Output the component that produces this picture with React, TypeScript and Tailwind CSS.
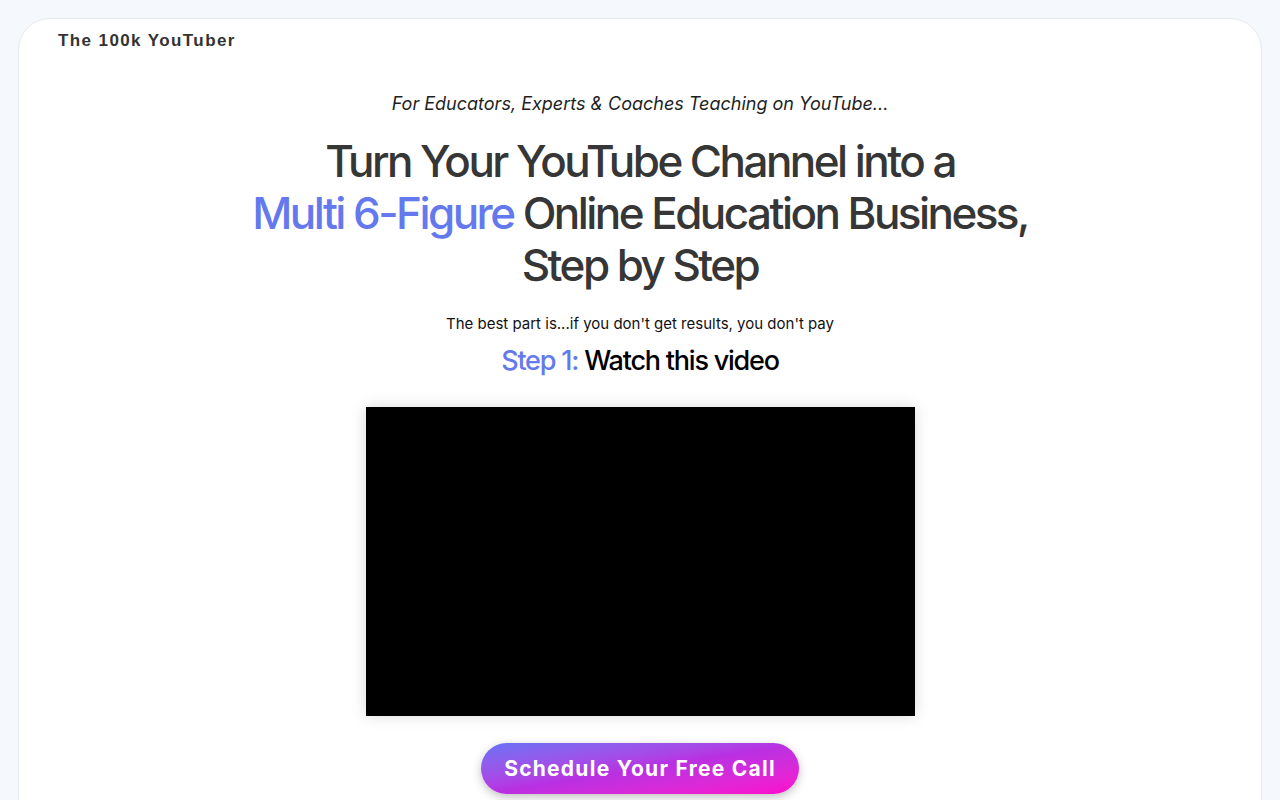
export default function App() {
  return (
    <div className="min-h-screen bg-[#f5f9fe] px-[18px] pt-[18px]">
      <div className="min-h-[820px] rounded-t-[32px] border border-[#e6eaef] bg-white px-10 pt-[14px] pb-10">
        <div
          className="-mt-[2px] -ml-[1px] text-[17px] font-bold leading-5 tracking-[1.4px] text-[#333333]"
          style={{ fontFamily: '"Liberation Sans", Arial, sans-serif' }}
        >
          The 100k YouTuber
        </div>

        <div className="flex flex-col items-center" style={{ fontFamily: "Inter, sans-serif" }}>
          <p className="mt-[41px] text-[18px] italic leading-6 text-[#1f1f1f]">
            For Educators, Experts &amp; Coaches Teaching on YouTube...
          </p>
          <h1 className="mt-[19px] text-center text-[44px] font-medium leading-[52px] tracking-[-0.058em] text-[#363636]">
            Turn Your YouTube Channel into a
            <br />
            <span className="text-[#6479ee]">Multi 6-Figure</span> Online Education Business,
            <br />
            Step by Step
          </h1>
          <p className="mt-[23px] text-[15px] leading-5 text-[#111111]">
            The best part is...if you don't get results, you don't pay
          </p>
          <h2 className="mt-[11px] text-[27px] font-medium leading-8 tracking-[-0.045em] text-black">
            <span className="text-[#6479ee]">Step 1:</span> Watch this video
          </h2>

          <div className="mt-[30px] h-[309px] w-[549px] bg-black shadow-[0_0_14px_rgba(0,0,0,0.15)]" />

          <button className="mt-[27px] h-[51px] w-[318px] rounded-full bg-gradient-to-br from-[#6472f4] via-[#b830e2] to-[#ff00cc] text-[21px] font-bold tracking-[0.06em] text-white shadow-[0_3px_10px_rgba(0,0,0,0.25)]">
            Schedule Your Free Call
          </button>
        </div>
      </div>
    </div>
  );
}
